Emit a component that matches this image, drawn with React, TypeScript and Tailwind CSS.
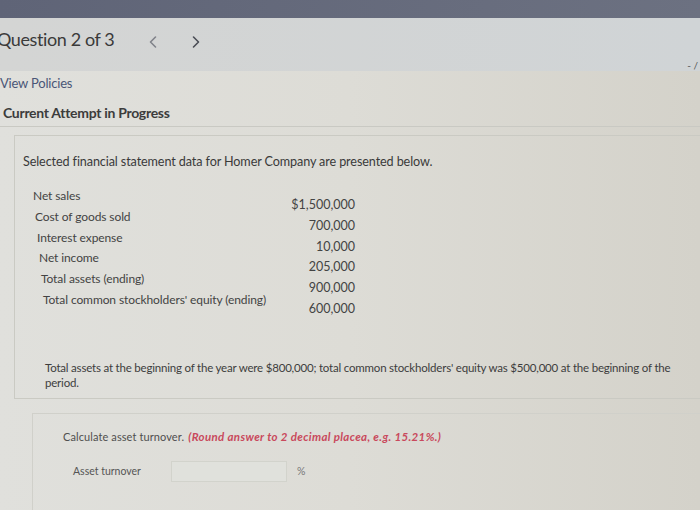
import React from "react";

const rows: { label: string; value: string; pl: string }[] = [
  { label: "Net sales", value: "$1,500,000", pl: "pl-[10px]" },
  { label: "Cost of goods sold", value: "700,000", pl: "pl-[12px]" },
  { label: "Interest expense", value: "10,000", pl: "pl-[14px]" },
  { label: "Net income", value: "205,000", pl: "pl-[16px]" },
  { label: "Total assets (ending)", value: "900,000", pl: "pl-[18px]" },
  { label: "Total common stockholders' equity (ending)", value: "600,000", pl: "pl-[20px]" },
];

function Chevron({ dir, color }: { dir: "l" | "r"; color: string }) {
  return (
    <svg width="10" height="14" viewBox="0 0 10 14" fill="none">
      <path
        d={dir === "l" ? "M7.5 2 L2.5 7 L7.5 12" : "M2.5 2 L7.5 7 L2.5 12"}
        stroke={color}
        strokeWidth="1.6"
        strokeLinecap="round"
        strokeLinejoin="round"
      />
    </svg>
  );
}

export default function App() {
  return (
    <div
      className="w-[700px] h-[510px] overflow-hidden bg-linear-to-r from-[#e0e0dc] via-[#dddcd6] to-[#d4d2ca] text-[#3d3d3d]"
      style={{ fontFamily: "Lato, 'Open Sans', sans-serif" }}
    >
      {/* top dark bar */}
      <div className="h-[18px] bg-linear-to-r from-[#5f6477] to-[#6c7181]" />
      {/* header */}
      <div className="h-[53px] bg-linear-to-r from-[#d4d5d4] to-[#d0d4d6] flex items-center relative pb-[12px]">
        <span className="text-[18px] text-[#3a3a3a] -ml-[3px] tracking-[-0.4px] leading-[22px]">Question 2 of 3</span>
        <span className="ml-[34px] mt-[6px]">
          <Chevron dir="l" color="#80838a" />
        </span>
        <span className="ml-[33px] mt-[7px]">
          <Chevron dir="r" color="#4a4d55" />
        </span>
        <span className="absolute right-[2px] top-[40px] text-[10px] text-[#555]">- /</span>
      </div>
      {/* policies */}
      <div className="pt-[3px]">
        <div className="text-[13px] text-[#4a5677] leading-[18px] tracking-[-0.2px]">View Policies</div>
        <div className="mt-[12px] pl-[3px] text-[14px] font-bold text-[#3c3c3c] leading-[18px] tracking-[-0.3px]">
          Current Attempt in Progress
        </div>
        <div className="mt-[4px] h-px bg-[#c9c9c3]" />
      </div>
      {/* card 1 */}
      <div className="mt-[8px] ml-[14px] border border-r-0 border-[#cacac3] pt-[17px] pl-[8px] h-[264px]">
        <div className="text-[12.6px] leading-[18px] text-[#3a3a3a] tracking-[-0.1px]">
          Selected financial statement data for Homer Company are presented below.
        </div>
        <div className="mt-[15px] flex">
          <div className="w-[232px] text-[12px] text-[#434343] tracking-[-0.1px]">
            {rows.map((r) => (
              <div key={r.label} className={`${r.pl} h-[20.8px] leading-[20px] whitespace-nowrap`}>
                {r.label}
              </div>
            ))}
          </div>
          <div className="w-[100px] pt-[9px] text-[12.5px] text-[#434343] text-right">
            {rows.map((r) => (
              <div key={r.value} className="h-[20.8px] leading-[20px]">
                {r.value}
              </div>
            ))}
          </div>
        </div>
        <div className="mt-[40px] pl-[22px] pr-[10px] text-[11.5px] leading-[15px] text-[#3d3d3d] tracking-[-0.2px]">
          Total assets at the beginning of the year were $800,000; total common stockholders' equity was $500,000 at the beginning of the period.
        </div>
      </div>
      {/* card 2 */}
      <div className="mt-[14px] ml-[32px] border border-r-0 border-b-0 border-[#d0d0ca] pt-[13px] pl-[30px] h-[120px]">
        <div className="leading-[15px] text-[#4f4f4f] whitespace-nowrap">
          <span className="text-[11px] tracking-[0.1px]">Calculate asset turnover.</span>{" "}
          <span className="text-[11.5px] font-bold italic text-[#c9495c] tracking-[0.35px]">
            (Round answer to 2 decimal placea, e.g. 15.21%.)
          </span>
        </div>
        <div className="mt-[17px] pl-[10px] flex items-center text-[10.5px] text-[#555]">
          <span className="w-[98px]">Asset turnover</span>
          <div className="w-[116px] h-[21px] border border-[#d2d3cc] bg-[#e0e1dc]" />
          <span className="ml-[10px] text-[#777]">%</span>
        </div>
      </div>
    </div>
  );
}
